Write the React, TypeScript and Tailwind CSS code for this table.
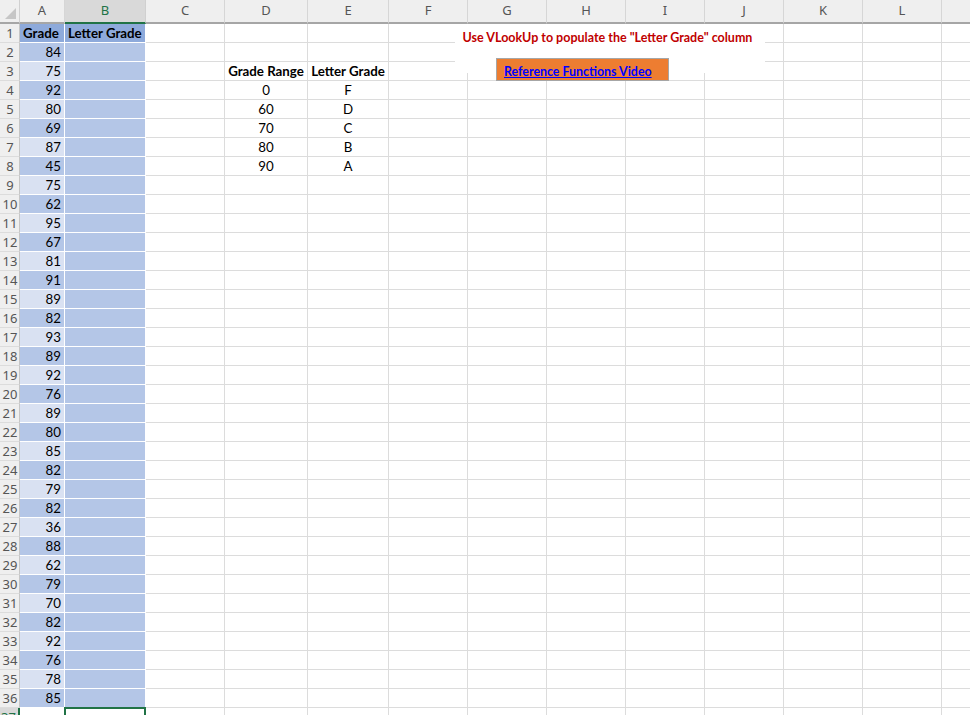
import React from "react";

const grades = [
  84, 75, 92, 80, 69, 87, 45, 75, 62, 95, 67, 81, 91, 89, 82, 93, 89, 92, 76, 89, 80, 85, 82, 79, 82, 36, 88, 62, 79,
  70, 82, 92, 76, 78, 85,
];

const lookup: [number, string][] = [
  [0, "F"],
  [60, "D"],
  [70, "C"],
  [80, "B"],
  [90, "A"],
];

// M sits past the right edge of the window, so its header stays blank
const letters = ["A", "B", "C", "D", "E", "F", "G", "H", "I", "J", "K", "L", ""];
const ROWS = 37;

function HeaderRow() {
  return (
    <>
      <div className="relative bg-[#efefef] border-r border-[#d0d0d0] border-b-2 border-b-[#a6a6a6]">
        <svg className="absolute right-[3px] bottom-[3px]" width="11" height="11" viewBox="0 0 11 11">
          <polygon points="11,0 11,11 0,11" fill="#c6c6c6" />
        </svg>
      </div>
      {letters.map((l, i) => {
        const active = l === "B";
        return (
          <div
            key={i}
            className={
              active
                ? "flex items-center justify-center bg-[#d9d9d9] border-r border-[#d0d0d0] border-b-2 border-b-[#217346] text-[#217346] text-[13px] font-['Noto_Sans',sans-serif]"
                : "flex items-center justify-center bg-[#efefef] border-r border-[#d6d6d6] border-b-2 border-b-[#a6a6a6] text-[#555555] text-[13px] font-['Noto_Sans',sans-serif]"
            }
          >
            {l}
          </div>
        );
      })}
    </>
  );
}

function Row({ r }: { r: number }) {
  const activeRow = r === 37;
  const grade = r >= 2 && r <= 36 ? grades[r - 2] : null;
  const lk = r >= 4 && r <= 8 ? lookup[r - 4] : null;

  const plain = "border-r border-b border-[#dcdcdc] leading-[19px] px-[3px] whitespace-nowrap";
  const blue = "border-r border-b border-white leading-[19px] px-[3px] whitespace-nowrap";

  let aBg = "";
  if (r === 1) aBg = "bg-[#8eaadb] font-bold";
  else if (r <= 36) aBg = r % 2 === 0 ? "bg-[#b4c6e7] text-right" : "bg-[#d9e1f2] text-right";

  return (
    <>
      <div
        className={
          activeRow
            ? "bg-[#d9d9d9] border-r-2 border-r-[#217346] border-b border-[#d0d0d0] text-[#217346] text-[13px] leading-[18px] pl-[1px] font-['Noto_Sans',sans-serif]"
            : "bg-[#efefef] border-r border-[#c6c6c6] border-b border-b-[#dcdcdc] text-[#555555] text-[13px] leading-[18px] pl-[1px] text-center font-['Noto_Sans',sans-serif]"
        }
      >
        {r}
      </div>
      {r <= 36 ? (
        <div className={`${blue} ${aBg}`}>{r === 1 ? "Grade" : grade}</div>
      ) : (
        <div className={plain} />
      )}
      {r <= 36 ? (
        <div className={`${blue} ${r === 1 ? "bg-[#8eaadb] font-bold" : "bg-[#b4c6e7]"}`}>
          {r === 1 ? "Letter Grade" : ""}
        </div>
      ) : (
        <div className={`${plain} relative`}>
          <div className="absolute -left-[1px] -top-[1px] w-[82px] h-[21px] border-2 border-[#217346]" />
        </div>
      )}
      <div className={plain} />
      <div className={`${plain} text-center ${r === 3 ? "font-bold px-0" : ""}`}>
        {r === 3 ? "Grade Range" : lk ? lk[0] : ""}
      </div>
      <div className={`${plain} text-center ${r === 3 ? "font-bold px-0" : ""}`}>
        {r === 3 ? "Letter Grade" : lk ? lk[1] : ""}
      </div>
      {Array.from({ length: 8 }).map((_, i) => (
        <div key={i} className={plain} />
      ))}
    </>
  );
}

export default function App() {
  return (
    <div className="relative w-[970px] h-[715px] overflow-hidden bg-white text-black text-[13.3px] font-['Lato',sans-serif]">
      <div className="grid w-[1021px] grid-cols-[20px_45px_81px_79px_83px_81px_79px_79px_79px_79px_79px_79px_79px_79px] grid-rows-[24px] auto-rows-[19px]">
        <HeaderRow />
        {Array.from({ length: ROWS }).map((_, i) => (
          <Row key={i} r={i + 1} />
        ))}
      </div>

      {/* text box shape over the grid */}
      <div className="absolute left-[455px] top-[24px] w-[310px] h-[49px] bg-white">
        <p className="pt-[5px] pr-[5px] text-center leading-[18px] font-bold text-[#c00000] text-[12.5px]">
          Use VLookUp to populate the "Letter Grade" column
        </p>
      </div>

      {/* button shape with hyperlink */}
      <div className="absolute left-[496px] top-[58px] w-[173px] h-[23px] bg-[#ed7d31] border border-[#a6a6a6] pl-[7px] pt-[1px] leading-[22px]">
        <a href="#" className="font-bold text-[12.4px] text-[#0000ff] underline">
          Reference Functions Video
        </a>
      </div>
    </div>
  );
}
